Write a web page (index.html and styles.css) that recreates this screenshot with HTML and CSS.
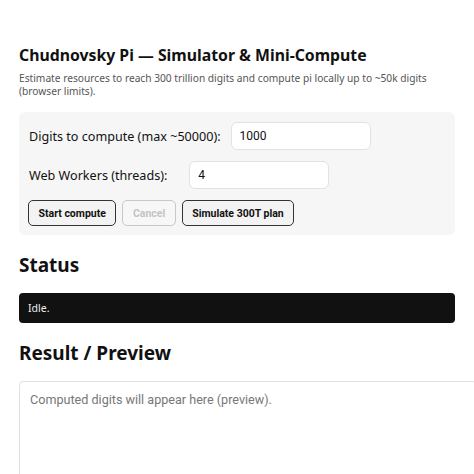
FILE: index.html
```html
<!DOCTYPE html>
<html lang="en">
<head>
<meta charset="utf-8">
<title>Chudnovsky Pi</title>
<link rel="stylesheet" href="styles.css">
</head>
<body>
<main class="page">
  <h1 class="title">Chudnovsky Pi — Simulator &amp; Mini-Compute</h1>
  <p class="subtitle">Estimate resources to reach 300 trillion digits and compute pi locally up to ~50k digits (browser limits).</p>

  <section class="panel">
    <div class="row">
      <label class="label" for="digits">Digits to compute (max ~50000):</label>
      <input class="field" id="digits" type="text" value="1000">
    </div>
    <div class="row row-wide">
      <label class="label" for="workers">Web Workers (threads):</label>
      <input class="field" id="workers" type="text" value="4">
    </div>
    <div class="buttons">
      <button class="btn" type="button">Start compute</button>
      <button class="btn" type="button" disabled>Cancel</button>
      <button class="btn" type="button">Simulate 300T plan</button>
    </div>
  </section>

  <h2 class="heading">Status</h2>
  <div class="status">Idle.</div>

  <h2 class="heading">Result / Preview</h2>
  <textarea class="result" placeholder="Computed digits will appear here (preview)."></textarea>
</main>
</body>
</html>
```
FILE: styles.css
```css
html, body {
  margin: 0;
  padding: 0;
  background: #fff;
}
body {
  font-family: "Noto Sans", "Open Sans", sans-serif;
  color: #111;
  overflow: hidden;
}
.page {
  padding: 37px 19px 0 19px;
  width: 436px;
}
.title {
  font-size: 15.8px;
  font-weight: 700;
  line-height: 22px;
  margin: 7px 0 6px 0;
}
.subtitle {
  font-size: 10.2px;
  line-height: 13px;
  color: #555;
  margin: 0 0 14px 0;
}
.panel {
  background: #f6f6f6;
  border-radius: 6px;
  padding: 10px 9px 9px 9px;
  display: flex;
  flex-direction: column;
  gap: 11px;
}
.row {
  display: flex;
  align-items: center;
  gap: 10px;
}
.row-wide {
  gap: 22px;
}
.label {
  font-size: 12.6px;
  padding-left: 1px;
}
.field {
  width: 140px;
  height: 28px;
  box-sizing: border-box;
  border: 1px solid #e2e2e2;
  border-radius: 6px;
  background: #fff;
  font-family: Roboto, sans-serif;
  font-size: 12px;
  padding: 0 8px;
  color: #111;
}
.buttons {
  display: flex;
  gap: 6px;
}
.btn {
  height: 26px;
  box-sizing: border-box;
  border: 1px solid #333;
  border-radius: 5px;
  background: #f3f3f3;
  font-family: Roboto, sans-serif;
  font-weight: 700;
  font-size: 10.5px;
  padding: 0 9.5px;
  color: #111;
}
.btn:disabled {
  border-color: #c8c8c8;
  color: #c4c4c4;
  background: #f7f7f7;
}
.heading {
  font-size: 19px;
  font-weight: 700;
  line-height: 26px;
  margin: 17px 0 15px 0;
}
.status {
  background: #111;
  color: #eee;
  border-radius: 4px;
  height: 30px;
  font-size: 10.5px;
  line-height: 30px;
  padding: 0 9px;
}
.result {
  display: block;
  width: 100%;
  height: 140px;
  border: 1px solid #e0e0e0;
  border-radius: 4px;
  padding: 10px 10px;
  font-family: Roboto, sans-serif;
  font-size: 12.6px;
  resize: none;
}
.result::placeholder {
  color: #777;
}
```
